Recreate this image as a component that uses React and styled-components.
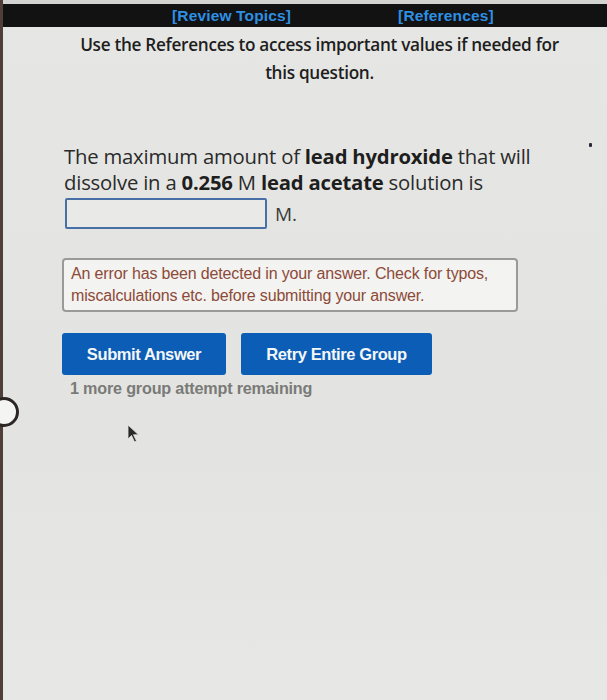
import React from "react";
import styled, { createGlobalStyle } from "styled-components";

const Global = createGlobalStyle`
  html, body { margin: 0; padding: 0; background: #e4e5e2; }
  body { font-family: "Open Sans", "Liberation Sans", sans-serif; }
`;

const Page = styled.div`
  position: relative;
  min-height: 700px;
  border-left: 3px solid #4e4039;
  background: linear-gradient(180deg, #e6e7e4 0%, #e3e4e1 60%, #e7e8e5 100%);
  box-sizing: border-box;
`;

const TopStrip = styled.div`
  height: 4px;
  background: #d3d4d1;
`;

const NavBar = styled.nav`
  height: 23px;
  background: #121212;
  display: flex;
  align-items: center;
  padding-left: 169px;
  gap: 107px;
`;

const NavLink = styled.a`
  font-family: "Liberation Sans", Arial, sans-serif;
  font-weight: 700;
  font-size: 15.5px;
  color: #2e8fe3;
  text-decoration: none;
  letter-spacing: 0.15px;
`;

const Content = styled.main`
  padding: 0 30px 0 59px;
`;

const Intro = styled.p`
  margin: 4px 0 0;
  text-align: center;
  font-family: "Open Sans", sans-serif;
  font-weight: 600;
  font-size: 17.2px;
  line-height: 28px;
  color: #1e1e1e;
  letter-spacing: -0.3px;
`;

const Question = styled.div`
  margin-top: 56px;
  padding-left: 2px;
  font-family: "Open Sans", sans-serif;
  font-size: 20.3px;
  line-height: 26px;
  color: #2a2a2a;
  letter-spacing: -0.2px;
  b { font-weight: 700; color: #1e1e1e; }
`;

const AnswerRow = styled.div`
  display: flex;
  align-items: center;
  gap: 8px;
  margin-top: 3px;
  padding-left: 1px;
`;

const AnswerInput = styled.input`
  width: 198px;
  height: 27px;
  border: 2px solid #4870a6;
  border-radius: 2px;
  background: #e9eae7;
  padding: 0;
  outline: none;
`;

const Unit = styled.span`
  font-size: 19px;
  color: #3a3a3a;
`;

const ErrorBox = styled.div`
  margin-top: 29px;
  width: 456px;
  box-sizing: border-box;
  padding: 3px 7px 3px;
  border: 2px solid #9a9a98;
  border-radius: 4px;
  background: #f3f3f1;
  font-family: "Liberation Sans", Arial, sans-serif;
  font-size: 16px;
  line-height: 22px;
  color: #8c4a38;
  letter-spacing: -0.15px;
`;

const ButtonRow = styled.div`
  display: flex;
  gap: 15px;
  margin-top: 21px;
`;

const Button = styled.button`
  width: ${(p) => p.$w}px;
  height: 42px;
  border: none;
  border-radius: 3px;
  background: #0b5db6;
  color: #f4f6f8;
  font-family: "Liberation Sans", Arial, sans-serif;
  font-weight: 700;
  font-size: 16.5px;
  letter-spacing: -0.4px;
  cursor: pointer;
`;

const Remaining = styled.div`
  margin-top: 4px;
  padding-left: 8px;
  font-family: "Liberation Sans", Arial, sans-serif;
  font-weight: 700;
  font-size: 16.2px;
  color: #7a7a78;
  letter-spacing: -0.2px;
`;

const EdgeCircle = styled.div`
  position: absolute;
  left: -14px;
  top: 397px;
  width: 24px;
  height: 24px;
  border-radius: 50%;
  background: #f4f4f2;
  border: 3px solid #2b2624;
`;

const Dot = styled.div`
  position: absolute;
  left: 586px;
  top: 143px;
  width: 3px;
  height: 4px;
  border-radius: 1px;
  background: #2a2a3a;
`;

const Cursor = styled.svg`
  position: absolute;
  left: 124px;
  top: 424px;
`;

export default function App() {
  return (
    <>
      <Global />
      <Page>
        <TopStrip />
        <NavBar>
          <NavLink href="#">[Review Topics]</NavLink>
          <NavLink href="#">[References]</NavLink>
        </NavBar>
        <Content>
          <Intro>
            Use the References to access important values if needed for
            <br />
            this question.
          </Intro>
          <Question>
            The maximum amount of <b>lead hydroxide</b> that will
            <br />
            dissolve in a <b>0.256</b> M <b>lead acetate</b> solution is
            <AnswerRow>
              <AnswerInput type="text" aria-label="answer" />
              <Unit>M.</Unit>
            </AnswerRow>
          </Question>
          <ErrorBox>
            An error has been detected in your answer. Check for typos,
            <br />
            miscalculations etc. before submitting your answer.
          </ErrorBox>
          <ButtonRow>
            <Button $w={164}>Submit Answer</Button>
            <Button $w={191}>Retry Entire Group</Button>
          </ButtonRow>
          <Remaining>1 more group attempt remaining</Remaining>
        </Content>
        <EdgeCircle />
        <Dot />
        <Cursor width="14" height="20" viewBox="0 0 14 20">
          <path d="M1 1 L1 15 L4.5 11.5 L7.5 18 L9.5 17 L6.5 10.8 L11.5 10.8 Z" fill="#2a2a2a" stroke="#e4e5e2" strokeWidth="0.8" />
        </Cursor>
      </Page>
    </>
  );
}
